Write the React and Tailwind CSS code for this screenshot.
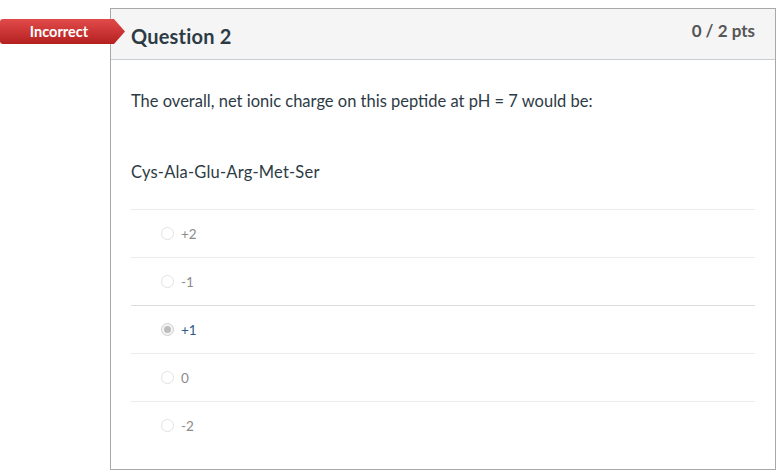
import React from 'react';

const answers = [
  { label: '+2', selected: false },
  { label: '-1', selected: false },
  { label: '+1', selected: true },
  { label: '0', selected: false },
  { label: '-2', selected: false },
];

export default function App() {
  return (
    <main className="relative min-h-screen bg-white font-['Lato','Open_Sans',sans-serif] text-[#2d3b45]">
      <div className="absolute left-0 top-[19px] z-10 flex h-[25px] w-[125px] items-center rounded-l-[3px] bg-gradient-to-b from-[#e24a4a] to-[#b41f1f] text-[14.5px] font-bold text-white [clip-path:polygon(0_0,114px_0,100%_50%,114px_100%,0_100%)]">
        <span className="w-[118px] text-center">Incorrect</span>
      </div>

      <section className="ml-[110px] pt-[8px]">
        <div className="h-[462px] w-[666px] border border-[#a8a8a8] bg-white">
          <header className="flex h-[51px] items-start justify-between border-b border-[#c7cdd1] bg-[#f5f5f5] px-[20px]">
            <h1 className="pt-[15px] text-[20px] font-bold leading-[24px] tracking-[0.2px] text-[#2d3b45]">Question 2</h1>
            <span className="pt-[12px] text-[17px] font-bold leading-[20px] text-[#555]">0 / 2 pts</span>
          </header>

          <div className="px-[20px] pt-[30px]">
            <p className="text-[16.5px] leading-[22px]">The overall, net ionic charge on this peptide at pH = 7 would be:</p>
            <p className="mt-[49px] text-[16.5px] leading-[22px] tracking-[0.2px]">Cys-Ala-Glu-Arg-Met-Ser</p>

            <ul className="mt-[26px]">
              {answers.map((a, i) => (
                <li
                  key={a.label}
                  className={`flex h-[48px] items-center border-t pl-[30px] ${i === 2 ? 'border-[#dcdcdc]' : 'border-[#ececec]'}`}
                >
                  {a.selected ? (
                    <span className="flex h-[13px] w-[13px] items-center justify-center rounded-full border border-[#cfcfcf] bg-[#f4f4f4]">
                      <span className="h-[7px] w-[7px] rounded-full bg-[#bdbdbd]" />
                    </span>
                  ) : (
                    <span className="h-[13px] w-[13px] rounded-full border border-[#e2e2e2] bg-white" />
                  )}
                  <span className={`ml-[7px] text-[13.5px] leading-[16px] ${a.selected ? 'text-[#2d5b8a]' : 'text-[#8b8b8b]'}`}>
                    {a.label}
                  </span>
                </li>
              ))}
            </ul>
          </div>
        </div>
      </section>
    </main>
  );
}
